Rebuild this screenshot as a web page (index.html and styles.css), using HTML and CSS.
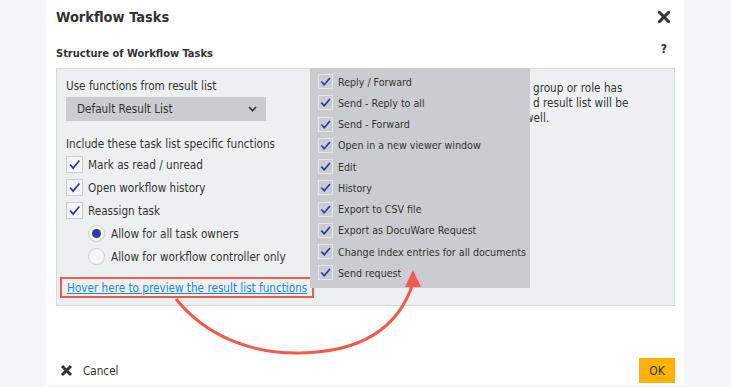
FILE: index.html
```html
<!DOCTYPE html>
<html lang="en">
<head>
<meta charset="utf-8">
<title>Workflow Tasks</title>
<link rel="stylesheet" href="styles.css">
</head>
<body>
<div class="dialog">
  <div class="head">
    <h1 class="title">Workflow Tasks</h1>
    <svg class="close" width="12" height="12" viewBox="0 0 12 12"><path d="M1.5 1.5 L10.5 10.5 M10.5 1.5 L1.5 10.5" stroke="#333" stroke-width="3" stroke-linecap="square"/></svg>
  </div>
  <div class="subhead">
    <h2 class="subtitle">Structure of Workflow Tasks</h2>
    <span class="help">?</span>
  </div>
  <div class="panel">
    <div class="leftcol">
      <div class="label">Use functions from result list</div>
      <div class="select">
        <span>Default Result List</span>
        <svg width="9" height="6" viewBox="0 0 9 6"><path d="M1 1 L4.5 4.5 L8 1" fill="none" stroke="#333" stroke-width="1.6"/></svg>
      </div>
      <div class="label gap">Include these task list specific functions</div>
      <div class="row"><span class="cb"><svg viewBox="0 0 17 17"><path d="M3.5 8.5 L7 12.5 L14 4" fill="none" stroke="#2f3aa6" stroke-width="2"/></svg></span>Mark as read / unread</div>
      <div class="row"><span class="cb"><svg viewBox="0 0 17 17"><path d="M3.5 8.5 L7 12.5 L14 4" fill="none" stroke="#2f3aa6" stroke-width="2"/></svg></span>Open workflow history</div>
      <div class="row"><span class="cb"><svg viewBox="0 0 17 17"><path d="M3.5 8.5 L7 12.5 L14 4" fill="none" stroke="#2f3aa6" stroke-width="2"/></svg></span>Reassign task</div>
      <div class="row sub"><span class="radio on"></span>Allow for all task owners</div>
      <div class="row sub"><span class="radio"></span>Allow for workflow controller only</div>
      <div class="linkbox"><a class="link" href="#">Hover here to preview the result list functions</a></div>
    </div>
    <div class="rightcol">
      <p class="note"><span>group or role has</span><span>d result list will be</span><span class="w3">well.</span></p>
    </div>
    <div class="popup">
      <div class="prow"><span class="pcb"><svg viewBox="0 0 14 14"><path d="M2.5 7 L5.6 10.5 L11.8 3.2" fill="none" stroke="#2f3aa6" stroke-width="1.9"/></svg></span>Reply / Forward</div>
      <div class="prow"><span class="pcb"><svg viewBox="0 0 14 14"><path d="M2.5 7 L5.6 10.5 L11.8 3.2" fill="none" stroke="#2f3aa6" stroke-width="1.9"/></svg></span>Send - Reply to all</div>
      <div class="prow"><span class="pcb"><svg viewBox="0 0 14 14"><path d="M2.5 7 L5.6 10.5 L11.8 3.2" fill="none" stroke="#2f3aa6" stroke-width="1.9"/></svg></span>Send - Forward</div>
      <div class="prow"><span class="pcb"><svg viewBox="0 0 14 14"><path d="M2.5 7 L5.6 10.5 L11.8 3.2" fill="none" stroke="#2f3aa6" stroke-width="1.9"/></svg></span>Open in a new viewer window</div>
      <div class="prow"><span class="pcb"><svg viewBox="0 0 14 14"><path d="M2.5 7 L5.6 10.5 L11.8 3.2" fill="none" stroke="#2f3aa6" stroke-width="1.9"/></svg></span>Edit</div>
      <div class="prow"><span class="pcb"><svg viewBox="0 0 14 14"><path d="M2.5 7 L5.6 10.5 L11.8 3.2" fill="none" stroke="#2f3aa6" stroke-width="1.9"/></svg></span>History</div>
      <div class="prow"><span class="pcb"><svg viewBox="0 0 14 14"><path d="M2.5 7 L5.6 10.5 L11.8 3.2" fill="none" stroke="#2f3aa6" stroke-width="1.9"/></svg></span>Export to CSV file</div>
      <div class="prow"><span class="pcb"><svg viewBox="0 0 14 14"><path d="M2.5 7 L5.6 10.5 L11.8 3.2" fill="none" stroke="#2f3aa6" stroke-width="1.9"/></svg></span>Export as DocuWare Request</div>
      <div class="prow"><span class="pcb"><svg viewBox="0 0 14 14"><path d="M2.5 7 L5.6 10.5 L11.8 3.2" fill="none" stroke="#2f3aa6" stroke-width="1.9"/></svg></span>Change index entries for all documents</div>
      <div class="prow"><span class="pcb"><svg viewBox="0 0 14 14"><path d="M2.5 7 L5.6 10.5 L11.8 3.2" fill="none" stroke="#2f3aa6" stroke-width="1.9"/></svg></span>Send request</div>
    </div>
  </div>
  <div class="foot">
    <div class="cancel">
      <svg width="13" height="13" viewBox="0 0 13 13"><path d="M2 2 L11 11 M11 2 L2 11" stroke="#333" stroke-width="3"/></svg>
      <span>Cancel</span>
    </div>
    <button class="ok">OK</button>
  </div>
  <svg class="arrow" width="731" height="387" viewBox="0 0 731 387">
    <path d="M176 299 C 205 335, 250 354, 300 353 C 360 352, 398 330, 413 283" fill="none" stroke="#f4594b" stroke-width="3"/>
    <polygon points="413,270 405,287 421,287" fill="#f4594b"/>
  </svg>
</div>
</body>
</html>
```

FILE: styles.css
```css
html, body {
  margin: 0;
  padding: 0;
  background: #f4f5f6;
}
body {
  font-family: "DejaVu Sans Condensed", "DejaVu Sans", sans-serif;
  font-size: 11.65px;
  color: #333;
}
.dialog {
  position: relative;
  margin-left: 46px;
  width: 638px;
  height: 385px;
  background: #fff;
  box-sizing: border-box;
  padding: 0 9px 0 10px;
  display: flex;
  flex-direction: column;
}
.head {
  height: 34px;
  display: flex;
  align-items: center;
  justify-content: space-between;
}
.title {
  margin: 0;
  font-size: 14.5px;
  font-weight: bold;
  color: #333;
}
.close {
  margin-right: 5px;
}
.subhead {
  height: 34px;
  display: flex;
  align-items: center;
  justify-content: space-between;
}
.subtitle {
  margin: 5px 0 0 0;
  font-size: 11px;
  font-weight: bold;
}
.help {
  font-weight: bold;
  font-size: 12px;
  margin-right: 8px;
  margin-top: -5px;
}
.panel {
  position: relative;
  height: 238px;
  box-sizing: border-box;
  border: 1px solid #d6d9db;
  background: #edf0f1;
  display: flex;
  padding: 9px 9px 0 9px;
}
.leftcol {
  width: 244px;
  display: flex;
  flex-direction: column;
}
.label {
  line-height: 16px;
  white-space: nowrap;
}
.label.gap {
  margin-top: 15px;
}
.select {
  margin-top: 3px;
  width: 200px;
  height: 24px;
  background: #c9cdd0;
  display: flex;
  align-items: center;
  justify-content: space-between;
  padding: 0 9px 0 11px;
  box-sizing: border-box;
}
.label.gap + .row {
  margin-top: 1px;
}
.row {
  height: 23px;
  display: flex;
  align-items: center;
  white-space: nowrap;
}
.cb {
  flex: none;
  width: 17px;
  height: 17px;
  box-sizing: border-box;
  border: 1px solid #c9cdd1;
  background: #f5f6f7;
  margin-right: 5px;
  display: inline-flex;
}
.cb svg, .pcb svg {
  width: 100%;
  height: 100%;
}
.row.sub {
  padding-left: 22px;
}
.radio {
  flex: none;
  width: 17px;
  height: 17px;
  box-sizing: border-box;
  border: 1px solid #c9cdd1;
  border-radius: 50%;
  background: #f5f6f7;
  margin-right: 6px;
  position: relative;
}
.radio.on::after {
  content: "";
  position: absolute;
  left: 3px;
  top: 3px;
  width: 9px;
  height: 9px;
  border-radius: 50%;
  background: #2f3aa6;
}
.linkbox {
  margin-top: 9px;
  margin-left: -6px;
  align-self: flex-start;
  border: 2px solid #f4594b;
  height: 21px;
  box-sizing: border-box;
  padding: 0 5px 0 5px;
  display: flex;
  align-items: center;
  white-space: nowrap;
}
.link {
  color: #1b8ad6;
  text-decoration: underline;
}
.rightcol {
  flex: 1;
}
.note {
  margin: 3px 0 0 0;
  padding-left: 223px;
  line-height: 15px;
}
.note span {
  display: block;
  white-space: nowrap;
}
.note .w3 {
  margin-left: -8px;
}
.popup {
  position: absolute;
  left: 253px;
  top: -1px;
  width: 220px;
  height: 220px;
  background: #c9cdd1;
  box-sizing: border-box;
  padding: 3px 0 0 8px;
  font-size: 10.6px;
}
.prow {
  height: 21.25px;
  display: flex;
  align-items: center;
  white-space: nowrap;
}
.pcb {
  flex: none;
  width: 15px;
  height: 15px;
  box-sizing: border-box;
  border: 1px solid #e3e5e7;
  margin-right: 5px;
  display: inline-flex;
}
.foot {
  flex: 1;
  display: flex;
  align-items: flex-end;
  justify-content: space-between;
  padding-bottom: 2px;
}
.cancel {
  display: flex;
  align-items: center;
  gap: 10px;
  margin-left: 4px;
  height: 25px;
}
.ok {
  width: 36px;
  height: 25px;
  border: none;
  background: #ffb300;
  color: #333;
  font-family: inherit;
  font-size: 12px;
  padding: 0;
}
.arrow {
  position: absolute;
  left: -46px;
  top: 0;
  pointer-events: none;
}
```
